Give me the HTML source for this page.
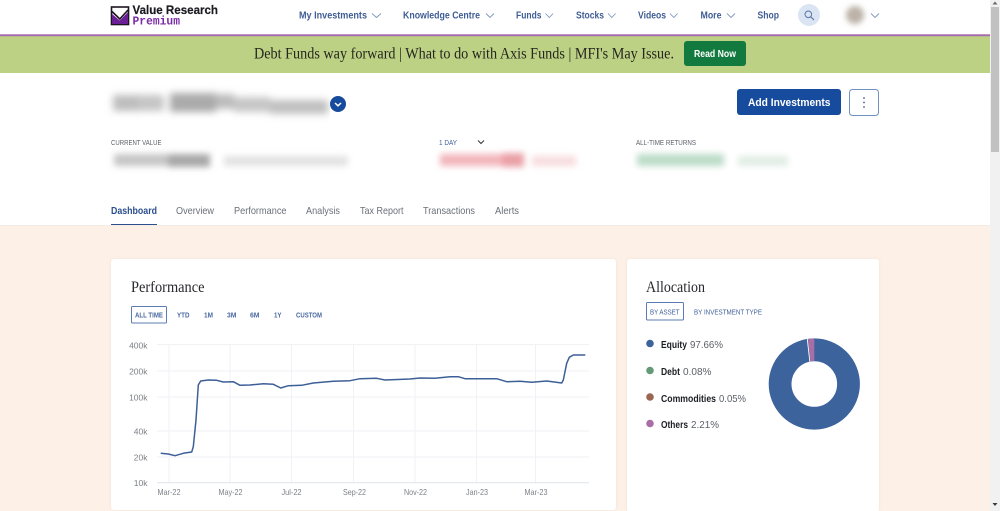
<!DOCTYPE html>
<html lang="en"><head><meta charset="utf-8"><title>Value Research Premium</title>
<style>
html,body{margin:0;padding:0;width:1000px;height:511px;overflow:hidden;background:#fff}
svg{display:block;filter:blur(.25px)}
text{font-family:"Liberation Sans",sans-serif}
.s{font-family:"Liberation Serif",serif}
.nav{font-size:10.5px;font-weight:bold;fill:#3f5d94}
.tab{font-size:10.5px;fill:#6a7079}
.lab{font-size:7px;fill:#5c6169}
.rng{font-size:7.5px;font-weight:bold;fill:#4a69a0}
.ax{font-size:8.5px;fill:#7c8087}
.lg{font-size:10.5px;font-weight:bold;fill:#1c1f24}
.lv{font-size:10.5px;fill:#5a5f66}
.chev{fill:none;stroke:#7f96bf;stroke-width:.9}
.grid{stroke:#f0f2f4;stroke-width:1;fill:none}
</style></head><body>
<svg width="1000" height="511" viewBox="0 0 1000 511" xmlns="http://www.w3.org/2000/svg">
<defs>
<filter id="b4" x="-10%" y="-60%" width="120%" height="220%"><feGaussianBlur stdDeviation="3.6"/></filter>
<filter id="b2" x="-15%" y="-100%" width="130%" height="300%"><feGaussianBlur stdDeviation="3.2"/></filter>
<filter id="av" x="-60%" y="-60%" width="220%" height="220%"><feGaussianBlur stdDeviation="3"/></filter>
<filter id="shadow" x="-5%" y="-5%" width="110%" height="110%"><feDropShadow dx="0" dy="0" stdDeviation="1.2" flood-color="#c9b8aa" flood-opacity=".28"/></filter>
</defs>
<rect width="1000" height="511" fill="#fff"/>

<!-- logo -->
<rect x="111.500" y="7" width="17" height="17.500" fill="#fff" stroke="#1b1420" stroke-width="1.600"/>
<path d="M112 14 L119.800 20.500 L128 12 V24 H112 Z" fill="#6b1f94"/>
<path d="M112 11.500 L119.800 19 L128 10" fill="none" stroke="#1b1420" stroke-width="1.600"/>
<text x="132.500" y="14" font-size="12" font-weight="bold" fill="#1b1b20" stroke="#1b1b20" stroke-width=".2" textLength="85.500" lengthAdjust="spacingAndGlyphs">Value Research</text>
<text x="132.500" y="24.500" font-size="11.500" font-weight="bold" fill="#7b2ca6" style="font-family:'Liberation Mono',monospace" textLength="47.500" lengthAdjust="spacingAndGlyphs">Premium</text>

<!-- nav -->
<text class="nav" x="299" y="18.700" textLength="68" lengthAdjust="spacingAndGlyphs">My Investments</text>
<path class="chev" d="M372 13.500 l4.500 4 l4.500 -4"/>
<text class="nav" x="403" y="18.700" textLength="77" lengthAdjust="spacingAndGlyphs">Knowledge Centre</text>
<path class="chev" d="M486 13.500 l4 4 l4 -4"/>
<text class="nav" x="516" y="18.700" textLength="25.500" lengthAdjust="spacingAndGlyphs">Funds</text>
<path class="chev" d="M545.500 13.500 l3.800 4 l3.800 -4"/>
<text class="nav" x="576" y="18.700" textLength="28" lengthAdjust="spacingAndGlyphs">Stocks</text>
<path class="chev" d="M608 13.500 l3.800 4 l3.800 -4"/>
<text class="nav" x="638" y="18.700" textLength="28" lengthAdjust="spacingAndGlyphs">Videos</text>
<path class="chev" d="M670 13.500 l3.800 4 l3.800 -4"/>
<text class="nav" x="700.500" y="18.700" textLength="21" lengthAdjust="spacingAndGlyphs">More</text>
<path class="chev" d="M727 13.500 l4 4 l4 -4"/>
<text class="nav" x="757.500" y="18.700" textLength="21.500" lengthAdjust="spacingAndGlyphs">Shop</text>
<circle cx="809" cy="15" r="11" fill="#dbe4f2"/>
<circle cx="808.300" cy="14.300" r="3.300" fill="none" stroke="#5875a8" stroke-width="1"/>
<path d="M810.700 16.700 L814 20" stroke="#5875a8" stroke-width="1.100"/>
<circle cx="855" cy="15" r="9" fill="#bcb2a8" filter="url(#av)"/>
<path class="chev" d="M871 13.500 l4 4 l4 -4"/>

<!-- banner -->
<rect x="0" y="36" width="990" height="37" fill="#bdd184"/>
<rect x="0" y="34.300" width="990" height="1.900" fill="#a668ae"/>
<text class="s" x="254" y="58.500" font-size="15.500" fill="#24261f" textLength="420" lengthAdjust="spacingAndGlyphs">Debt Funds way forward | What to do with Axis Funds | MFI's May Issue.</text>
<rect x="684" y="41" width="62" height="25" rx="3" fill="#137a3f"/>
<text x="694" y="57" font-size="10.500" font-weight="bold" fill="#fff" textLength="42" lengthAdjust="spacingAndGlyphs">Read Now</text>

<!-- header account (blurred name) -->
<g filter="url(#b4)">
<rect x="113" y="95" width="50" height="16" fill="#bdbdbd"/>
<rect x="138" y="97" width="26" height="13" fill="#c6c6c6"/>
<rect x="170" y="93" width="46" height="19" fill="#aaaaaa"/>
<rect x="216" y="94" width="18" height="15" fill="#bcbcbc"/>
<rect x="234" y="97" width="36" height="15" fill="#c6c6c6"/>
<rect x="270" y="100" width="58" height="14" fill="#c0c0c0"/>
</g>
<rect x="330" y="85" width="8" height="36" fill="#fff"/>
<circle cx="338" cy="104" r="8" fill="#174b9d"/>
<path d="M335 103 l3 2.800 l3 -2.800" fill="none" stroke="#fff" stroke-width="1.500"/>
<rect x="737" y="89" width="104" height="26" rx="3" fill="#174b9d"/>
<text x="748" y="106" font-size="11" font-weight="bold" fill="#fff" textLength="82.500" lengthAdjust="spacingAndGlyphs">Add Investments</text>
<rect x="849.500" y="89.500" width="29" height="26" rx="3" fill="#fff" stroke="#7390c2"/>
<circle cx="864" cy="98" r=".9" fill="#3f5f99"/><circle cx="864" cy="102.500" r=".9" fill="#3f5f99"/><circle cx="864" cy="107" r=".9" fill="#3f5f99"/>

<!-- stats -->
<text class="lab" x="111" y="145" textLength="50.500" lengthAdjust="spacingAndGlyphs">CURRENT VALUE</text>
<g filter="url(#b2)">
<rect x="114" y="154" width="54" height="12" fill="#c6c6c6"/>
<rect x="168" y="154" width="42" height="13" fill="#a8a8a8"/>
<rect x="224" y="156" width="124" height="10" fill="#e2e2e2"/>
</g>
<text class="lab" x="439" y="145" style="fill:#3f5f99" textLength="18" lengthAdjust="spacingAndGlyphs">1 DAY</text>
<path d="M478 140.500 l3 3 l3 -3" fill="none" stroke="#30343a" stroke-width="1"/>
<g filter="url(#b2)">
<rect x="440" y="154" width="64" height="12" fill="#f2b5ba"/>
<rect x="502" y="153" width="22" height="14" fill="#eaa0a6"/>
<rect x="532" y="156" width="44" height="10" fill="#f7dcde"/>
</g>
<text class="lab" x="636" y="145" textLength="60" lengthAdjust="spacingAndGlyphs">ALL-TIME RETURNS</text>
<g filter="url(#b2)">
<rect x="637" y="154" width="87" height="12" fill="#bcdcc8"/>
<rect x="738" y="156" width="50" height="10" fill="#e0ede4"/>
</g>

<!-- tabs -->
<text class="tab" x="111" y="214" style="fill:#2c4f8e;font-weight:bold" textLength="46" lengthAdjust="spacingAndGlyphs">Dashboard</text>
<text class="tab" x="176" y="214" textLength="38" lengthAdjust="spacingAndGlyphs">Overview</text>
<text class="tab" x="234" y="214" textLength="52.500" lengthAdjust="spacingAndGlyphs">Performance</text>
<text class="tab" x="306" y="214" textLength="34" lengthAdjust="spacingAndGlyphs">Analysis</text>
<text class="tab" x="360" y="214" textLength="43.500" lengthAdjust="spacingAndGlyphs">Tax Report</text>
<text class="tab" x="423" y="214" textLength="52" lengthAdjust="spacingAndGlyphs">Transactions</text>
<text class="tab" x="495" y="214" textLength="24" lengthAdjust="spacingAndGlyphs">Alerts</text>
<rect x="111" y="224" width="46" height="1.300" fill="#2c4f8e"/>

<!-- peach -->
<rect x="0" y="226" width="990" height="285" fill="#fdf0e7"/>
<rect x="0" y="225" width="990" height="1" fill="#f3ece6"/>

<!-- cards -->
<rect x="111" y="259" width="505" height="251" rx="3" fill="#fff" filter="url(#shadow)"/>
<rect x="627" y="259" width="252" height="253" rx="3" fill="#fff" filter="url(#shadow)"/>

<!-- performance -->
<text class="s" x="131" y="292" font-size="15.500" fill="#26282c" textLength="73.500" lengthAdjust="spacingAndGlyphs">Performance</text>
<rect x="131.500" y="306.500" width="35" height="16.500" rx="1" fill="#fff" stroke="#5d7cb3"/>
<text class="rng" x="135" y="317.500" textLength="28" lengthAdjust="spacingAndGlyphs">ALL TIME</text>
<text class="rng" x="177" y="317.500" textLength="12.500" lengthAdjust="spacingAndGlyphs">YTD</text>
<text class="rng" x="204" y="317.500" textLength="9" lengthAdjust="spacingAndGlyphs">1M</text>
<text class="rng" x="227" y="317.500" textLength="9.500" lengthAdjust="spacingAndGlyphs">3M</text>
<text class="rng" x="250" y="317.500" textLength="9.500" lengthAdjust="spacingAndGlyphs">6M</text>
<text class="rng" x="274" y="317.500" textLength="7.500" lengthAdjust="spacingAndGlyphs">1Y</text>
<text class="rng" x="296" y="317.500" textLength="26" lengthAdjust="spacingAndGlyphs">CUSTOM</text>

<path class="grid" d="M157 344.500H589M157 371H589M157 397H589M157 431H589M157 457H589M169 345V483M230 345V483M291.500 345V483M353.500 345V483M415 345V483M476.500 345V483M535.500 345V483"/>
<path d="M157 482.800H589" stroke="#dfe3ea" stroke-width="1"/>
<text class="ax" x="147.500" y="348.500" text-anchor="end">400k</text>
<text class="ax" x="147.500" y="374.500" text-anchor="end">200k</text>
<text class="ax" x="147.500" y="400.500" text-anchor="end">100k</text>
<text class="ax" x="147.500" y="434.500" text-anchor="end">40k</text>
<text class="ax" x="147.500" y="460.500" text-anchor="end">20k</text>
<text class="ax" x="147.500" y="486" text-anchor="end">10k</text>
<text class="ax" x="169" y="495" text-anchor="middle" textLength="23" lengthAdjust="spacingAndGlyphs">Mar-22</text>
<text class="ax" x="230.500" y="495" text-anchor="middle" textLength="24" lengthAdjust="spacingAndGlyphs">May-22</text>
<text class="ax" x="291.500" y="495" text-anchor="middle" textLength="20" lengthAdjust="spacingAndGlyphs">Jul-22</text>
<text class="ax" x="354.500" y="495" text-anchor="middle" textLength="23" lengthAdjust="spacingAndGlyphs">Sep-22</text>
<text class="ax" x="415.500" y="495" text-anchor="middle" textLength="23" lengthAdjust="spacingAndGlyphs">Nov-22</text>
<text class="ax" x="477" y="495" text-anchor="middle" textLength="22" lengthAdjust="spacingAndGlyphs">Jan-23</text>
<text class="ax" x="536" y="495" text-anchor="middle" textLength="23" lengthAdjust="spacingAndGlyphs">Mar-23</text>
<path d="M160.700 453.300 L168.300 454 L175 455.700 L183.300 453.300 L191.700 452 L193.300 446.700 L196 420 L198.300 385 L200.700 381 L208.300 380 L216.700 380.300 L223.300 382 L233.300 381.700 L240 385.300 L250 385 L263.300 383.700 L273.300 384.300 L280.700 388 L288.300 385.700 L301.700 385.300 L313.300 383 L333.300 381.300 L350 380.700 L360 378.700 L376.700 378.300 L385 380 L410 379 L420 378 L435 378.300 L450 376.700 L458.300 376.700 L465 378.700 L496.700 378.700 L506.700 381.700 L520 381.300 L531.700 382.300 L546.700 381 L561.700 383 L563.300 380 L566.700 363.300 L569.300 357.300 L573.300 355 L585.300 355" fill="none" stroke="#3d5f97" stroke-width="1.500" stroke-linejoin="round"/>

<!-- allocation -->
<text class="s" x="646" y="292" font-size="15.500" fill="#26282c" textLength="59" lengthAdjust="spacingAndGlyphs">Allocation</text>
<rect x="646.500" y="302.500" width="37" height="17.500" rx="1" fill="#fff" stroke="#5d7cb3"/>
<text class="rng" x="650" y="314.500" style="font-weight:normal;fill:#3f5f99" textLength="29.500" lengthAdjust="spacingAndGlyphs">BY ASSET</text>
<text class="rng" x="694" y="314.500" style="font-weight:normal;fill:#3f5f99" textLength="68" lengthAdjust="spacingAndGlyphs">BY INVESTMENT TYPE</text>

<circle cx="650" cy="343.500" r="3.800" fill="#3d639c"/>
<text class="lg" x="661" y="348" textLength="26" lengthAdjust="spacingAndGlyphs">Equity</text>
<text class="lv" x="690" y="348" textLength="33" lengthAdjust="spacingAndGlyphs">97.66%</text>
<circle cx="650" cy="370.500" r="3.800" fill="#649a76"/>
<text class="lg" x="661" y="375" textLength="19" lengthAdjust="spacingAndGlyphs">Debt</text>
<text class="lv" x="683" y="375" textLength="28.500" lengthAdjust="spacingAndGlyphs">0.08%</text>
<circle cx="650" cy="397" r="3.800" fill="#9a6650"/>
<text class="lg" x="661" y="402" textLength="55" lengthAdjust="spacingAndGlyphs">Commodities</text>
<text class="lv" x="719" y="402" textLength="27" lengthAdjust="spacingAndGlyphs">0.05%</text>
<circle cx="650" cy="423.500" r="3.800" fill="#a96ea6"/>
<text class="lg" x="661" y="428" textLength="27" lengthAdjust="spacingAndGlyphs">Others</text>
<text class="lv" x="691" y="428" textLength="28" lengthAdjust="spacingAndGlyphs">2.21%</text>

<circle cx="814.300" cy="384" r="34.200" fill="none" stroke="#3d639c" stroke-width="22.800"/>
<path d="M808 339 L814.300 338.500 L814.300 361 L810.500 361.400 Z" fill="#a96ea6"/>
<path d="M807.300 339 L809.800 361.500" stroke="#fff" stroke-width=".9"/>

<!-- scrollbar -->
<rect x="990" y="0" width="10" height="511" fill="#f1f1f1"/>
<rect x="991" y="7" width="8" height="145" fill="#c1c1c1"/>
<path d="M995 1.500 l2.500 3 h-5 z" fill="#6a6a6a"/>
<path d="M995 506 l2.500 -3 h-5 z" fill="#3a3a3a"/>
</svg>
</body></html>
